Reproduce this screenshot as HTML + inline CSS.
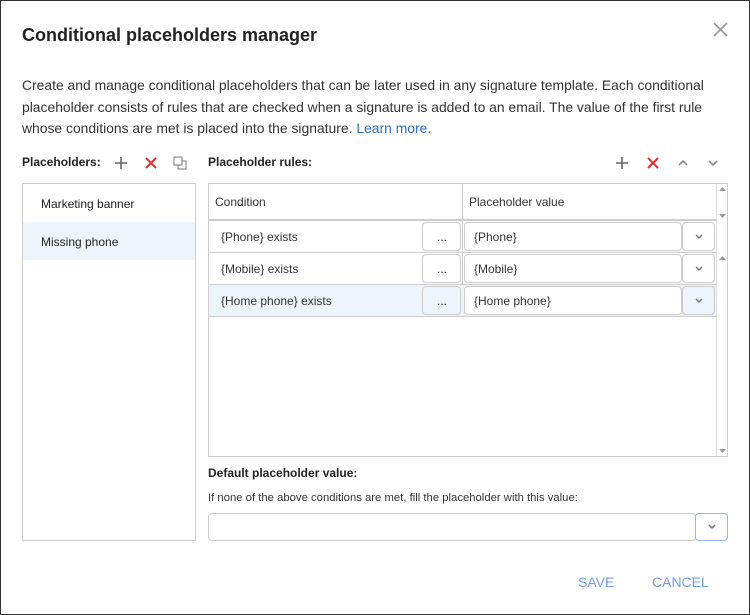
<!DOCTYPE html>
<html><head><style>
*{box-sizing:border-box;margin:0;padding:0}
body{width:750px;height:615px;background:#fff;font-family:"Liberation Sans",sans-serif;color:#222;position:relative;overflow:hidden}
.frame{position:absolute;left:0;top:0;width:750px;height:615px;border:1px solid #333}
.a{position:absolute}
.t{font-size:12px;color:#333}
.btn{position:absolute;border:1px solid #ccc;border-radius:4px;background:#fff}
</style></head><body>
<div class="frame"></div>
<div class="a" style="left:22px;top:25px;font-size:18px;font-weight:bold;color:#222">Conditional placeholders manager</div>
<svg class="a" style="left:713px;top:22px" width="15" height="15"><path d="M1 1L14 14M14 1L1 14" stroke="#999" stroke-width="1.6"/></svg>
<div class="a" style="left:22px;top:75px;width:720px;font-size:13.9px;line-height:21.7px;color:#333;white-space:nowrap">Create and manage conditional placeholders that can be later used in any signature template. Each conditional<br>placeholder consists of rules that are checked when a signature is added to an email. The value of the first rule<br>whose conditions are met is placed into the signature. <span style="color:#2f6fc4">Learn more.</span></div>

<div class="a" style="left:22px;top:155px;font-size:12px;font-weight:bold">Placeholders:</div>
<svg class="a" style="left:114px;top:156px" width="14" height="14"><path d="M7 1V13M1 7H13" stroke="#666" stroke-width="1.6"/></svg>
<svg class="a" style="left:145px;top:157px" width="12" height="12"><path d="M1 1L11 11M11 1L1 11" stroke="#e03030" stroke-width="2"/></svg>
<svg class="a" style="left:173px;top:156px" width="14" height="14"><rect x="1" y="1" width="8" height="8" fill="none" stroke="#777"/><path d="M9 5H13V13H5V9" fill="none" stroke="#777"/></svg>

<div class="a" style="left:22px;top:183px;width:174px;height:358px;border:1px solid #ccc"></div>
<div class="a t" style="left:41px;top:197px;color:#222">Marketing banner</div>
<div class="a" style="left:23px;top:222px;width:172px;height:38px;background:#eef4fb"></div>
<div class="a t" style="left:41px;top:235px;color:#222">Missing phone</div>

<div class="a" style="left:208px;top:155px;font-size:12px;font-weight:bold">Placeholder rules:</div>
<svg class="a" style="left:615px;top:156px" width="14" height="14"><path d="M7 1V13M1 7H13" stroke="#666" stroke-width="1.6"/></svg>
<svg class="a" style="left:647px;top:157px" width="12" height="12"><path d="M1 1L11 11M11 1L1 11" stroke="#e03030" stroke-width="2"/></svg>
<svg class="a" style="left:677px;top:159px" width="12" height="8"><path d="M2 6L6 2L10 6" fill="none" stroke="#888" stroke-width="1.6"/></svg>
<svg class="a" style="left:707px;top:159px" width="12" height="8"><path d="M2 2L6 6L10 2" fill="none" stroke="#888" stroke-width="1.6"/></svg>

<div class="a" style="left:208px;top:183px;width:520px;height:274px;border:1px solid #ccc"></div>
<div class="a" style="left:209px;top:219px;width:507px;height:2px;background:#ccc"></div>
<div class="a" style="left:462px;top:184px;width:1px;height:132px;background:#ccc"></div>
<div class="a" style="left:716px;top:184px;width:1px;height:272px;background:#ddd"></div>
<svg class="a" style="left:718px;top:186px" width="9" height="268"><path d="M1 5L4.5 1L8 5Z M1 28L4.5 32L8 28Z M1 74L4.5 70L8 74Z M1 263L4.5 267L8 263Z" fill="#999"/></svg>
<div class="a t" style="left:215px;top:195px">Condition</div>
<div class="a t" style="left:469px;top:195px">Placeholder value</div>

<div class="a" style="left:209px;top:252px;width:507px;height:1px;background:#ccc"></div>
<div class="a" style="left:209px;top:284px;width:507px;height:1px;background:#ccc"></div>
<div class="a" style="left:209px;top:285px;width:507px;height:31px;background:#eef4fb"></div>
<div class="a" style="left:209px;top:316px;width:507px;height:1px;background:#ccc"></div>

<div class="a t" style="left:221px;top:230px">{Phone} exists</div>
<div class="a t" style="left:221px;top:262px">{Mobile} exists</div>
<div class="a t" style="left:221px;top:294px">{Home phone} exists</div>

<div class="btn" style="left:422px;top:222px;width:39px;height:29px"></div>
<div class="btn" style="left:422px;top:254px;width:39px;height:29px"></div>
<div class="btn" style="left:422px;top:286px;width:39px;height:29px;background:#eef4fb"></div>
<div class="a t" style="left:437px;top:230px">...</div>
<div class="a t" style="left:437px;top:262px">...</div>
<div class="a t" style="left:437px;top:294px">...</div>

<div class="btn" style="left:464px;top:222px;width:218px;height:29px"></div>
<div class="btn" style="left:464px;top:254px;width:218px;height:29px"></div>
<div class="btn" style="left:464px;top:286px;width:218px;height:29px"></div>
<div class="a t" style="left:474px;top:230px">{Phone}</div>
<div class="a t" style="left:474px;top:262px">{Mobile}</div>
<div class="a t" style="left:474px;top:294px">{Home phone}</div>
<div class="btn" style="left:682px;top:222px;width:33px;height:29px"></div>
<div class="btn" style="left:682px;top:254px;width:33px;height:29px"></div>
<div class="btn" style="left:682px;top:286px;width:33px;height:29px;background:#eef4fb"></div>
<svg class="a" style="left:694px;top:234px" width="10" height="6"><path d="M2 1L5 4L8 1" fill="none" stroke="#777" stroke-width="1.5"/></svg>
<svg class="a" style="left:694px;top:266px" width="10" height="6"><path d="M2 1L5 4L8 1" fill="none" stroke="#777" stroke-width="1.5"/></svg>
<svg class="a" style="left:694px;top:298px" width="10" height="6"><path d="M2 1L5 4L8 1" fill="none" stroke="#777" stroke-width="1.5"/></svg>

<div class="a" style="left:208px;top:466px;font-size:12px;font-weight:bold">Default placeholder value:</div>
<div class="a" style="left:208px;top:492px;font-size:11.3px;color:#333">If none of the above conditions are met, fill the placeholder with this value:</div>
<div class="btn" style="left:208px;top:513px;width:488px;height:28px"></div>
<div class="btn" style="left:695px;top:513px;width:33px;height:28px;border-color:#8fb8ee"></div>
<svg class="a" style="left:707px;top:524px" width="10" height="6"><path d="M2 1L5 4L8 1" fill="none" stroke="#777" stroke-width="1.5"/></svg>

<div class="a" style="left:578px;top:574px;font-size:14px;color:#6f9ef0">SAVE</div>
<div class="a" style="left:652px;top:574px;font-size:14px;color:#6f9ef0">CANCEL</div>
</body></html>
